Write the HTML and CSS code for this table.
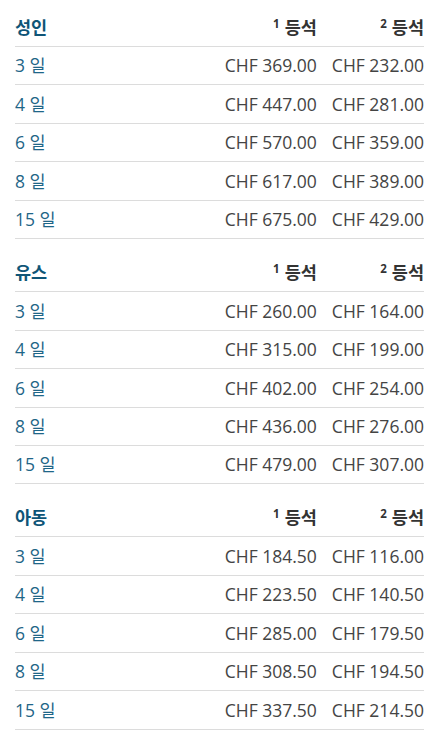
FILE: index.html
```html
<!DOCTYPE html>
<html lang="ko">
<head>
<meta charset="utf-8">
<link rel="stylesheet" href="styles.css">
</head>
<body>
<div class="page">
  <div class="fare">
    <div class="row head"><span class="label">성인</span><span class="price"><sup>1</sup> 등석</span><span class="price"><sup>2</sup> 등석</span></div>
    <div class="row"><span class="label">3 일</span><span class="price">CHF 369.00</span><span class="price">CHF 232.00</span></div>
    <div class="row"><span class="label">4 일</span><span class="price">CHF 447.00</span><span class="price">CHF 281.00</span></div>
    <div class="row"><span class="label">6 일</span><span class="price">CHF 570.00</span><span class="price">CHF 359.00</span></div>
    <div class="row"><span class="label">8 일</span><span class="price">CHF 617.00</span><span class="price">CHF 389.00</span></div>
    <div class="row"><span class="label">15 일</span><span class="price">CHF 675.00</span><span class="price">CHF 429.00</span></div>
  </div>
  <div class="fare">
    <div class="row head"><span class="label">유스</span><span class="price"><sup>1</sup> 등석</span><span class="price"><sup>2</sup> 등석</span></div>
    <div class="row"><span class="label">3 일</span><span class="price">CHF 260.00</span><span class="price">CHF 164.00</span></div>
    <div class="row"><span class="label">4 일</span><span class="price">CHF 315.00</span><span class="price">CHF 199.00</span></div>
    <div class="row"><span class="label">6 일</span><span class="price">CHF 402.00</span><span class="price">CHF 254.00</span></div>
    <div class="row"><span class="label">8 일</span><span class="price">CHF 436.00</span><span class="price">CHF 276.00</span></div>
    <div class="row"><span class="label">15 일</span><span class="price">CHF 479.00</span><span class="price">CHF 307.00</span></div>
  </div>
  <div class="fare">
    <div class="row head"><span class="label">아동</span><span class="price"><sup>1</sup> 등석</span><span class="price"><sup>2</sup> 등석</span></div>
    <div class="row"><span class="label">3 일</span><span class="price">CHF 184.50</span><span class="price">CHF 116.00</span></div>
    <div class="row"><span class="label">4 일</span><span class="price">CHF 223.50</span><span class="price">CHF 140.50</span></div>
    <div class="row"><span class="label">6 일</span><span class="price">CHF 285.00</span><span class="price">CHF 179.50</span></div>
    <div class="row"><span class="label">8 일</span><span class="price">CHF 308.50</span><span class="price">CHF 194.50</span></div>
    <div class="row"><span class="label">15 일</span><span class="price">CHF 337.50</span><span class="price">CHF 214.50</span></div>
  </div>
</div>
</body>
</html>
```
FILE: styles.css
```css
html, body {
  margin: 0;
  padding: 0;
  background: #fff;
}
body {
  font-family: "Open Sans", "Noto Sans CJK KR", sans-serif;
  font-size: 17.5px;
  color: #444;
}
.page {
  padding: 8px 13px 0 15px;
}
.fare {
  display: grid;
  grid-template-columns: 1fr auto auto;
  margin-bottom: 14px;
}
.row {
  display: contents;
}
.row > span {
  box-sizing: border-box;
  height: 38.45px;
  display: flex;
  align-items: center;
  border-bottom: 1px solid #dcdcdc;
  line-height: 1.4;
  white-space: nowrap;
}
.row > .price {
  justify-content: flex-end;
  padding-left: 15px;
}
.label {
  color: #1f6688;
}
.head > span {
  height: 39px;
  font-weight: 700;
  color: #333;
}
.head > .label {
  color: #0f5577;
}
sup {
  font-size: 11.5px;
  line-height: 0;
  margin-right: 5px;
  position: relative;
  top: -3px;
}
```
